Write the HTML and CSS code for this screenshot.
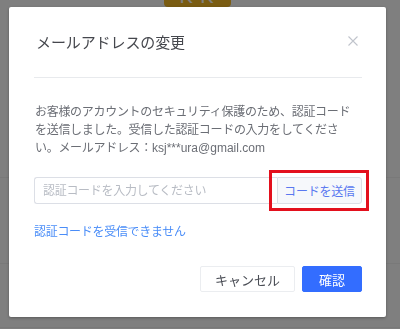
FILE: index.html
```html
<!DOCTYPE html>
<html lang="ja">
<head>
<meta charset="utf-8">
<title>メールアドレスの変更</title>
<link rel="stylesheet" href="styles.css">
</head>
<body>
<div class="page">
  <div class="topbar">
    <div class="avatar">K K</div>
  </div>
  <div class="page-row row-a"></div>
  <div class="page-row row-b"></div>
</div>
<div class="overlay"></div>
<div class="dialog" role="dialog">
  <div class="dialog-header">
    <span class="dialog-title">メールアドレスの変更</span>
    <span class="close" aria-label="閉じる">
      <svg width="10" height="10" viewBox="0 0 10 10"><path d="M0.5 0.5 L9.5 9.5 M9.5 0.5 L0.5 9.5" stroke="#c0c4cc" stroke-width="1.1" fill="none"/></svg>
    </span>
  </div>
  <div class="dialog-body">
    <p class="desc">お客様のアカウントのセキュリティ保護のため、認証コードを送信しました。受信した認証コードの入力をしてください。メールアドレス：<span class="mail">ksj***ura@gmail.com</span></p>
    <div class="input-group">
      <input class="code-input" type="text" placeholder="認証コードを入力してください">
      <div class="send-wrap">
        <button class="send-btn">コードを送信</button>
        <span class="highlight"></span>
      </div>
    </div>
    <a class="link" href="#">認証コードを受信できません</a>
  </div>
  <div class="dialog-footer">
    <button class="btn btn-cancel">キャンセル</button>
    <button class="btn btn-primary">確認</button>
  </div>
</div>
</body>
</html>
```
FILE: styles.css
```css
* { box-sizing: border-box; }
html, body {
  margin: 0;
  padding: 0;
  width: 400px;
  height: 329px;
  overflow: hidden;
  background: #ffffff;
  font-family: "Liberation Sans", "Noto Sans CJK JP", sans-serif;
}
.page {
  height: 329px;
  overflow: hidden;
}
.topbar {
  display: flex;
  justify-content: center;
  height: 178px;
  border-bottom: 1px solid #f2f2f2;
}
.avatar {
  margin-top: -14px;
  margin-left: -6px;
  width: 67px;
  height: 21px;
  background: #f4b824;
  border-radius: 4px;
  color: #ffffff;
  font-size: 20px;
  line-height: 20px;
  text-align: center;
  letter-spacing: 1px;
}
.page-row {
  height: 86px;
  border-bottom: 1px solid #f2f2f2;
}
.row-b {
  height: 64px;
}
.overlay {
  position: fixed;
  inset: 0;
  background: rgba(0, 0, 0, 0.5);
}
.dialog {
  position: absolute;
  left: 9px;
  top: 7px;
  width: 377px;
  height: 310px;
  background: #ffffff;
  border-radius: 2px;
  box-shadow: 0 1px 3px rgba(0, 0, 0, 0.3);
  padding: 25px 24px 25px 25px;
  display: flex;
  flex-direction: column;
}
.dialog-header {
  display: flex;
  justify-content: space-between;
  align-items: flex-start;
  padding: 0 0 23px 0;
  border-bottom: 1px solid #e8eaed;
}
.dialog-title {
  font-size: 15px;
  line-height: 22px;
  color: #45474d;
  padding-left: 2px;
  letter-spacing: -0.1px;
}
.close {
  display: flex;
  margin-right: 4px;
  margin-top: 4px;
}
.dialog-body {
  padding-top: 25px;
}
.desc {
  margin: 0;
  font-size: 12px;
  line-height: 18px;
  color: #6b6e75;
  padding: 0 6px 0 1px;
  letter-spacing: -0.3px;
}
.mail {
  letter-spacing: 0;
}
.input-group {
  margin-top: 20px;
  display: flex;
  height: 27px;
}
.code-input {
  flex: 1;
  min-width: 0;
  height: 27px;
  border: 1px solid #dcdfe6;
  border-right: none;
  border-radius: 3px 0 0 3px;
  padding: 0 8px;
  font-family: "Liberation Sans", "Noto Sans CJK JP", sans-serif;
  font-size: 12px;
  letter-spacing: -0.3px;
  color: #606266;
  outline: none;
}
.code-input::placeholder {
  color: #b8bcc4;
}
.send-wrap {
  position: relative;
  width: 85px;
}
.send-btn {
  width: 85px;
  height: 27px;
  border: 1px solid #dcdfe6;
  border-radius: 0 3px 3px 0;
  background: #f6f8fb;
  color: #5a78f0;
  font-family: "Liberation Sans", "Noto Sans CJK JP", sans-serif;
  font-size: 12px;
  letter-spacing: -0.2px;
  padding: 0;
}
.highlight {
  position: absolute;
  left: -8px;
  top: -7px;
  right: -7px;
  bottom: -7px;
  border: 3px solid #e3101d;
}
.link {
  display: block;
  margin-top: 19px;
  font-size: 12px;
  line-height: 18px;
  letter-spacing: -0.3px;
  color: #4a8df8;
  text-decoration: none;
}
.dialog-footer {
  margin-top: auto;
  display: flex;
  justify-content: flex-end;
  gap: 7px;
}
.btn {
  height: 26px;
  border-radius: 2px;
  font-family: "Liberation Sans", "Noto Sans CJK JP", sans-serif;
  font-size: 13px;
  padding: 0;
}
.btn-cancel {
  width: 95px;
  background: #ffffff;
  border: 1px solid #ebedf0;
  color: #4a4d55;
}
.btn-primary {
  width: 60px;
  background: #336dff;
  border: 1px solid #336dff;
  color: #ffffff;
}
```
